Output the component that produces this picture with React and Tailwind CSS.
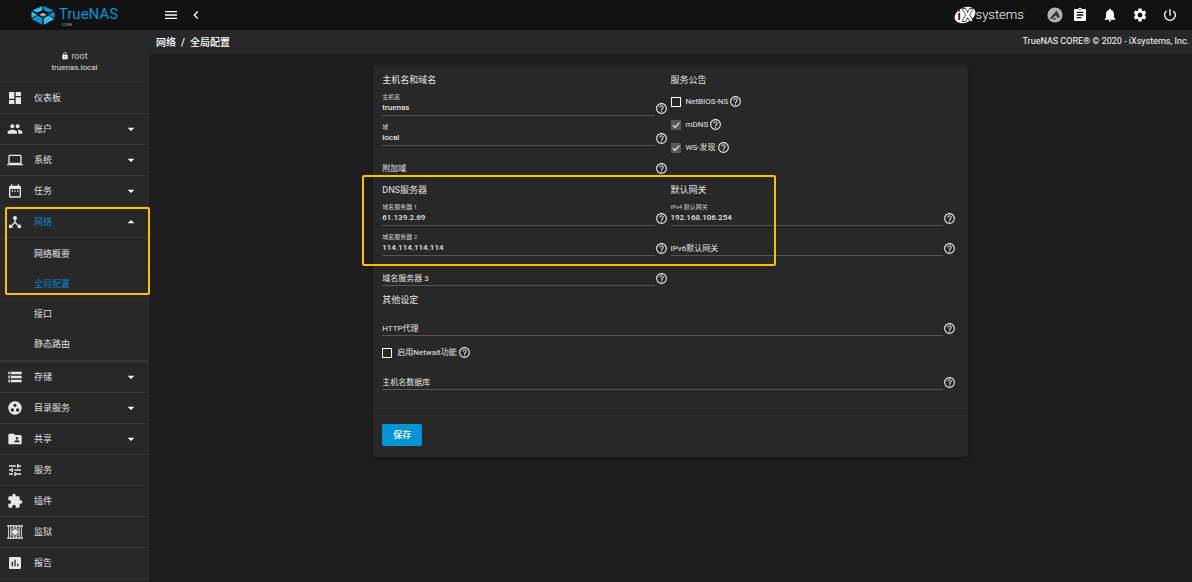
import {
  MdArrowDropDown,
  MdArrowDropUp,
  MdAssessment,
  MdAssignment,
  MdChevronLeft,
  MdDashboard,
  MdDateRange,
  MdDeviceHub,
  MdExtension,
  MdFolderShared,
  MdGroupWork,
  MdHelpOutline,
  MdLaptop,
  MdLock,
  MdMenu,
  MdNotifications,
  MdPeople,
  MdPowerSettingsNew,
  MdSettings,
  MdStorage,
  MdTune,
} from 'react-icons/md';

const NAV_TOP = [
  { label: '仪表板', icon: MdDashboard },
  { label: '账户', icon: MdPeople, expandable: true },
  { label: '系统', icon: MdLaptop, expandable: true },
  { label: '任务', icon: MdDateRange, expandable: true },
];

const NETWORK_PAGES = [
  { label: '网络概要' },
  { label: '全局配置', active: true },
  { label: '接口' },
  { label: '静态路由' },
];

const NAV_BOTTOM = [
  { label: '存储', icon: MdStorage, expandable: true },
  { label: '目录服务', icon: MdGroupWork, expandable: true },
  { label: '共享', icon: MdFolderShared, expandable: true },
  { label: '服务', icon: MdTune },
  { label: '插件', icon: MdExtension },
  { label: '监狱', icon: JailIcon },
  { label: '报告', icon: MdAssessment },
];

function JailIcon({ className }) {
  return (
    <svg viewBox="0 0 18 16" className={className} fill="none" stroke="currentColor">
      <path d="M0 1.2h18M0 14.8h18" strokeWidth="1.4" />
      <path d="M1.8 1v14M4.3 1v14M13.7 1v14M16.2 1v14" strokeWidth="1" />
      <path d="M7.4 1v3M10.6 1v3M7.4 12v3M10.6 12v3" strokeWidth="1" />
      <circle cx="9" cy="8" r="4.6" strokeWidth="0.9" />
      <circle cx="9" cy="8" r="3.2" fill="currentColor" stroke="none" />
    </svg>
  );
}

function TrueNasMark() {
  return (
    <svg viewBox="0 0 24 19" className="h-[19px] w-6" aria-hidden="true">
      <path d="M11.3 0v4.2L6.4 6.6 1.4 4.6z" fill="#31beec" />
      <path d="M12.7 0v4.2l4.9 2.4 5-2z" fill="#0095d5" />
      <path d="M0.5 5.6L6.6 8.8 0.5 11.8z" fill="#31beec" />
      <path d="M23.5 5.6l-6.1 3.2 6.1 3z" fill="#0095d5" />
      <path d="M6.4 9.4l4.9 2.6V18.8L0.6 13z" fill="#0095d5" />
      <path d="M17.6 9.4l-4.9 2.6v6.8L23.4 13z" fill="#31beec" />
      <path d="M12 6.8l3.8 2-3.8 2-3.8-2z" fill="#aeadae" />
    </svg>
  );
}

function IxLogo() {
  return (
    <div className="flex items-center text-white">
      <svg viewBox="0 0 22 24" className="h-6 w-[22px]" role="img" aria-label="iX">
        <ellipse cx="11" cy="12" rx="11" ry="7.4" fill="#fff" transform="rotate(-26 11 12)" />
        <text x="3.4" y="16.6" fontFamily="Roboto, sans-serif" fontSize="12" fontWeight="700" fill="#111">i</text>
        <text
          x="8.4"
          y="17.8"
          fontFamily="Roboto, sans-serif"
          fontSize="16"
          fontWeight="700"
          fill="#fff"
          stroke="#111"
          strokeWidth="1.4"
          paintOrder="stroke"
        >
          X
        </text>
      </svg>
      <span className="text-[13px] leading-4 font-light">systems</span>
      <span className="self-start text-[4px] leading-4">·</span>
    </div>
  );
}

function TrueCommandIcon() {
  return (
    <svg viewBox="0 0 16 16" className="size-4" aria-hidden="true">
      <circle cx="8" cy="8" r="7.6" fill="#b4b4b4" />
      <path d="M2.6 11.6L9.6 3.4l3.4 6.4-2.4 1.4-1.5-3-1.6 1-2 2.6z" fill="#333" />
      <path d="M5.6 13.4l2-3 1.8 1.4z" fill="#333" />
    </svg>
  );
}

function TopBar() {
  return (
    <header className="flex h-[30px] items-center bg-[#111111] text-white">
      <a href="#home" className="flex w-[149px] items-center justify-center gap-1">
        <TrueNasMark />
        <span className="flex flex-col pt-[2px] text-[#0095d5]">
          <span className="text-[15px] leading-4">TrueNAS</span>
          <span className="pl-[3px] text-[4px] leading-[5px] text-[#b0b0b0]">CORE</span>
        </span>
      </a>
      <button type="button" aria-label="菜单" className="ml-[14px]">
        <MdMenu className="size-4" />
      </button>
      <button type="button" aria-label="收起" className="ml-[9px]">
        <MdChevronLeft className="size-4" />
      </button>
      <div className="ml-auto flex items-center pr-[7px]">
        <IxLogo />
        <button type="button" aria-label="TrueCommand" className="ml-5 flex w-5 justify-center">
          <TrueCommandIcon />
        </button>
        <button type="button" aria-label="任务管理" className="flex w-[30px] justify-center">
          <MdAssignment className="size-4" />
        </button>
        <button type="button" aria-label="警报" className="flex w-[30px] justify-center">
          <MdNotifications className="size-4" />
        </button>
        <button type="button" aria-label="设置" className="flex w-[30px] justify-center">
          <MdSettings className="size-4" />
        </button>
        <button type="button" aria-label="电源" className="flex w-[30px] justify-center">
          <MdPowerSettingsNew className="size-4" />
        </button>
      </div>
    </header>
  );
}

function NavItem({ label, icon: Icon, expandable, open }) {
  const Arrow = open ? MdArrowDropUp : MdArrowDropDown;
  return (
    <a
      href="#nav"
      className="flex h-[31px] items-center border-b border-[#363636] pr-[10px] pl-[7px]"
    >
      <Icon className="size-4 text-[#e8e8e8]" />
      <span className={open ? 'ml-[11px] pt-[2px] text-[#0b86c4]' : 'ml-[11px] pt-[2px]'}>
        {label}
      </span>
      {expandable && <Arrow className="ml-auto size-4 text-white" />}
    </a>
  );
}

function Sidebar() {
  return (
    <aside className="w-[149px] shrink-0 bg-[#282828] text-[9px] text-[#e0e0e0]">
      <div className="flex h-[53px] flex-col items-center justify-center border-b border-[#303030] pt-3 leading-3">
        <p className="flex items-center gap-[2px] text-[#c8c8c8]">
          <MdLock className="size-2 text-white" />
          root
        </p>
        <p className="text-[8px]">truenas.local</p>
      </div>
      <nav>
        {NAV_TOP.map((item) => (
          <NavItem key={item.label} {...item} />
        ))}
        <div className="relative">
          <NavItem label="网络" icon={MdDeviceHub} expandable open />
          <ul className="border-b-2 border-[#363636] pt-[2px] pb-px">
            {NETWORK_PAGES.map((page) => (
              <li key={page.label} className="border-b border-[#2f2f2f] last:border-0">
                <a
                  href="#network"
                  className={
                    page.active
                      ? 'block pl-[34px] leading-[29px] text-[#0b86c4]'
                      : 'block pl-[34px] leading-[29px]'
                  }
                >
                  {page.label}
                </a>
              </li>
            ))}
          </ul>
          <div className="pointer-events-none absolute top-0 -right-px left-[5px] h-[88px] rounded-xs border-2 border-[#ffc000]" />
        </div>
        {NAV_BOTTOM.map((item) => (
          <NavItem key={item.label} {...item} />
        ))}
      </nav>
    </aside>
  );
}

function Help({ label }) {
  return (
    <button type="button" aria-label={`${label} 帮助`} className="shrink-0">
      <MdHelpOutline className="size-[13px] text-[#e6e6e6]" />
    </button>
  );
}

function Field({ id, label, value }) {
  return (
    <div className="flex h-[30px] items-end pr-[3px]">
      {value ? (
        <div className="flex h-full flex-1 flex-col justify-end border-b border-[#565656] pb-px">
          <label htmlFor={id} className="text-[6px] leading-[6px] text-[#cfcfcf]">
            {label}
          </label>
          <input
            id={id}
            defaultValue={value}
            className="h-[14px] w-full bg-transparent font-medium outline-none"
          />
        </div>
      ) : (
        <div className="flex flex-1 border-b border-[#565656]">
          <label htmlFor={id} className="h-[14px] leading-4">
            {label}
          </label>
          <input id={id} className="h-[14px] min-w-0 flex-1 bg-transparent outline-none" />
        </div>
      )}
      <div className="flex pb-px">
        <Help label={label} />
      </div>
    </div>
  );
}

function Check({ id, label, checked }) {
  return (
    <div className="flex items-center">
      <span className="grid size-[10px]">
        <input
          id={id}
          type="checkbox"
          defaultChecked={checked}
          disabled={checked}
          className="col-start-1 row-start-1 size-[10px] appearance-none border border-white disabled:border-[#585858] disabled:bg-[#585858]"
        />
        {checked && (
          <svg viewBox="0 0 10 10" className="pointer-events-none col-start-1 row-start-1 size-[10px]">
            <path d="M1.8 5.2l2.2 2.2 4.4-4.8" fill="none" stroke="#f0f0f0" strokeWidth="1.1" />
          </svg>
        )}
      </span>
      <label htmlFor={id} className="mr-px ml-[5px]">
        {label}
      </label>
      <Help label={label} />
    </div>
  );
}

function Title({ children }) {
  return <h2 className="h-[14px] text-[9px] leading-4">{children}</h2>;
}

function NetworkForm() {
  return (
    <form className="mx-auto mt-[11px] w-[57%] rounded bg-[#282828] pt-px text-[8px] leading-3 text-[#e6e6e6] shadow-md">
      <div className="px-[9px] pb-[18px]">
        <div className="grid grid-cols-2 pt-[6px]">
          <section>
            <Title>主机名和域名</Title>
            <Field id="hostname" label="主机名" value="truenas" />
            <Field id="domain" label="域" value="local" />
            <Field id="domains" label="附加域" />
          </section>
          <section>
            <Title>服务公告</Title>
            <div className="flex flex-col gap-[10px] pt-[9px]">
              <Check id="netbios" label="NetBIOS-NS" />
              <Check id="mdns" label="mDNS" checked />
              <Check id="wsd" label="WS-发现" checked />
            </div>
          </section>
        </div>

        <div className="relative grid grid-cols-2 pt-[6px]">
          <section>
            <Title>DNS服务器</Title>
            <Field id="ns1" label="域名服务器 1" value="61.139.2.69" />
            <Field id="ns2" label="域名服务器 2" value="114.114.114.114" />
            <Field id="ns3" label="域名服务器 3" />
          </section>
          <section>
            <Title>默认网关</Title>
            <Field id="gw4" label="IPv4 默认网关" value="192.168.106.254" />
            <Field id="gw6" label="IPv6默认网关" />
          </section>
          <div className="pointer-events-none absolute -top-px -left-5 h-[91px] w-[414px] rounded-xs border-2 border-[#ffc000]" />
        </div>

        <section className="pt-[6px]">
          <Title>其他设定</Title>
          <Field id="proxy" label="HTTP代理" />
          <div className="h-6 pt-[10px]">
            <Check id="netwait" label="启用Netwait功能" />
          </div>
          <Field id="hosts" label="主机名数据库" />
        </section>
      </div>
      <div className="border-t border-[#303030] px-[9px] pt-[15px] pb-[11px]">
        <button
          type="button"
          className="flex h-[22px] items-center rounded-xs bg-[#0095d5] px-[11px] text-[9px] font-medium text-white"
        >
          保存
        </button>
      </div>
    </form>
  );
}

export default function App() {
  return (
    <div className="flex min-h-screen flex-col bg-[#1e1e1e] font-[Roboto,'Noto_Sans_CJK_SC',sans-serif]">
      <TopBar />
      <div className="flex flex-1">
        <Sidebar />
        <main className="min-w-0 flex-1">
          <div className="flex h-6 items-center justify-between bg-[#282828] pr-[3px] pl-[7px] text-white">
            <nav className="flex gap-[5px] text-[10px] font-medium">
              <a href="#network">网络</a>
              <span>/</span>
              <a href="#global">全局配置</a>
            </nav>
            <p className="text-[9px]">TrueNAS CORE® © 2020 - iXsystems, Inc.</p>
          </div>
          <NetworkForm />
        </main>
      </div>
    </div>
  );
}
